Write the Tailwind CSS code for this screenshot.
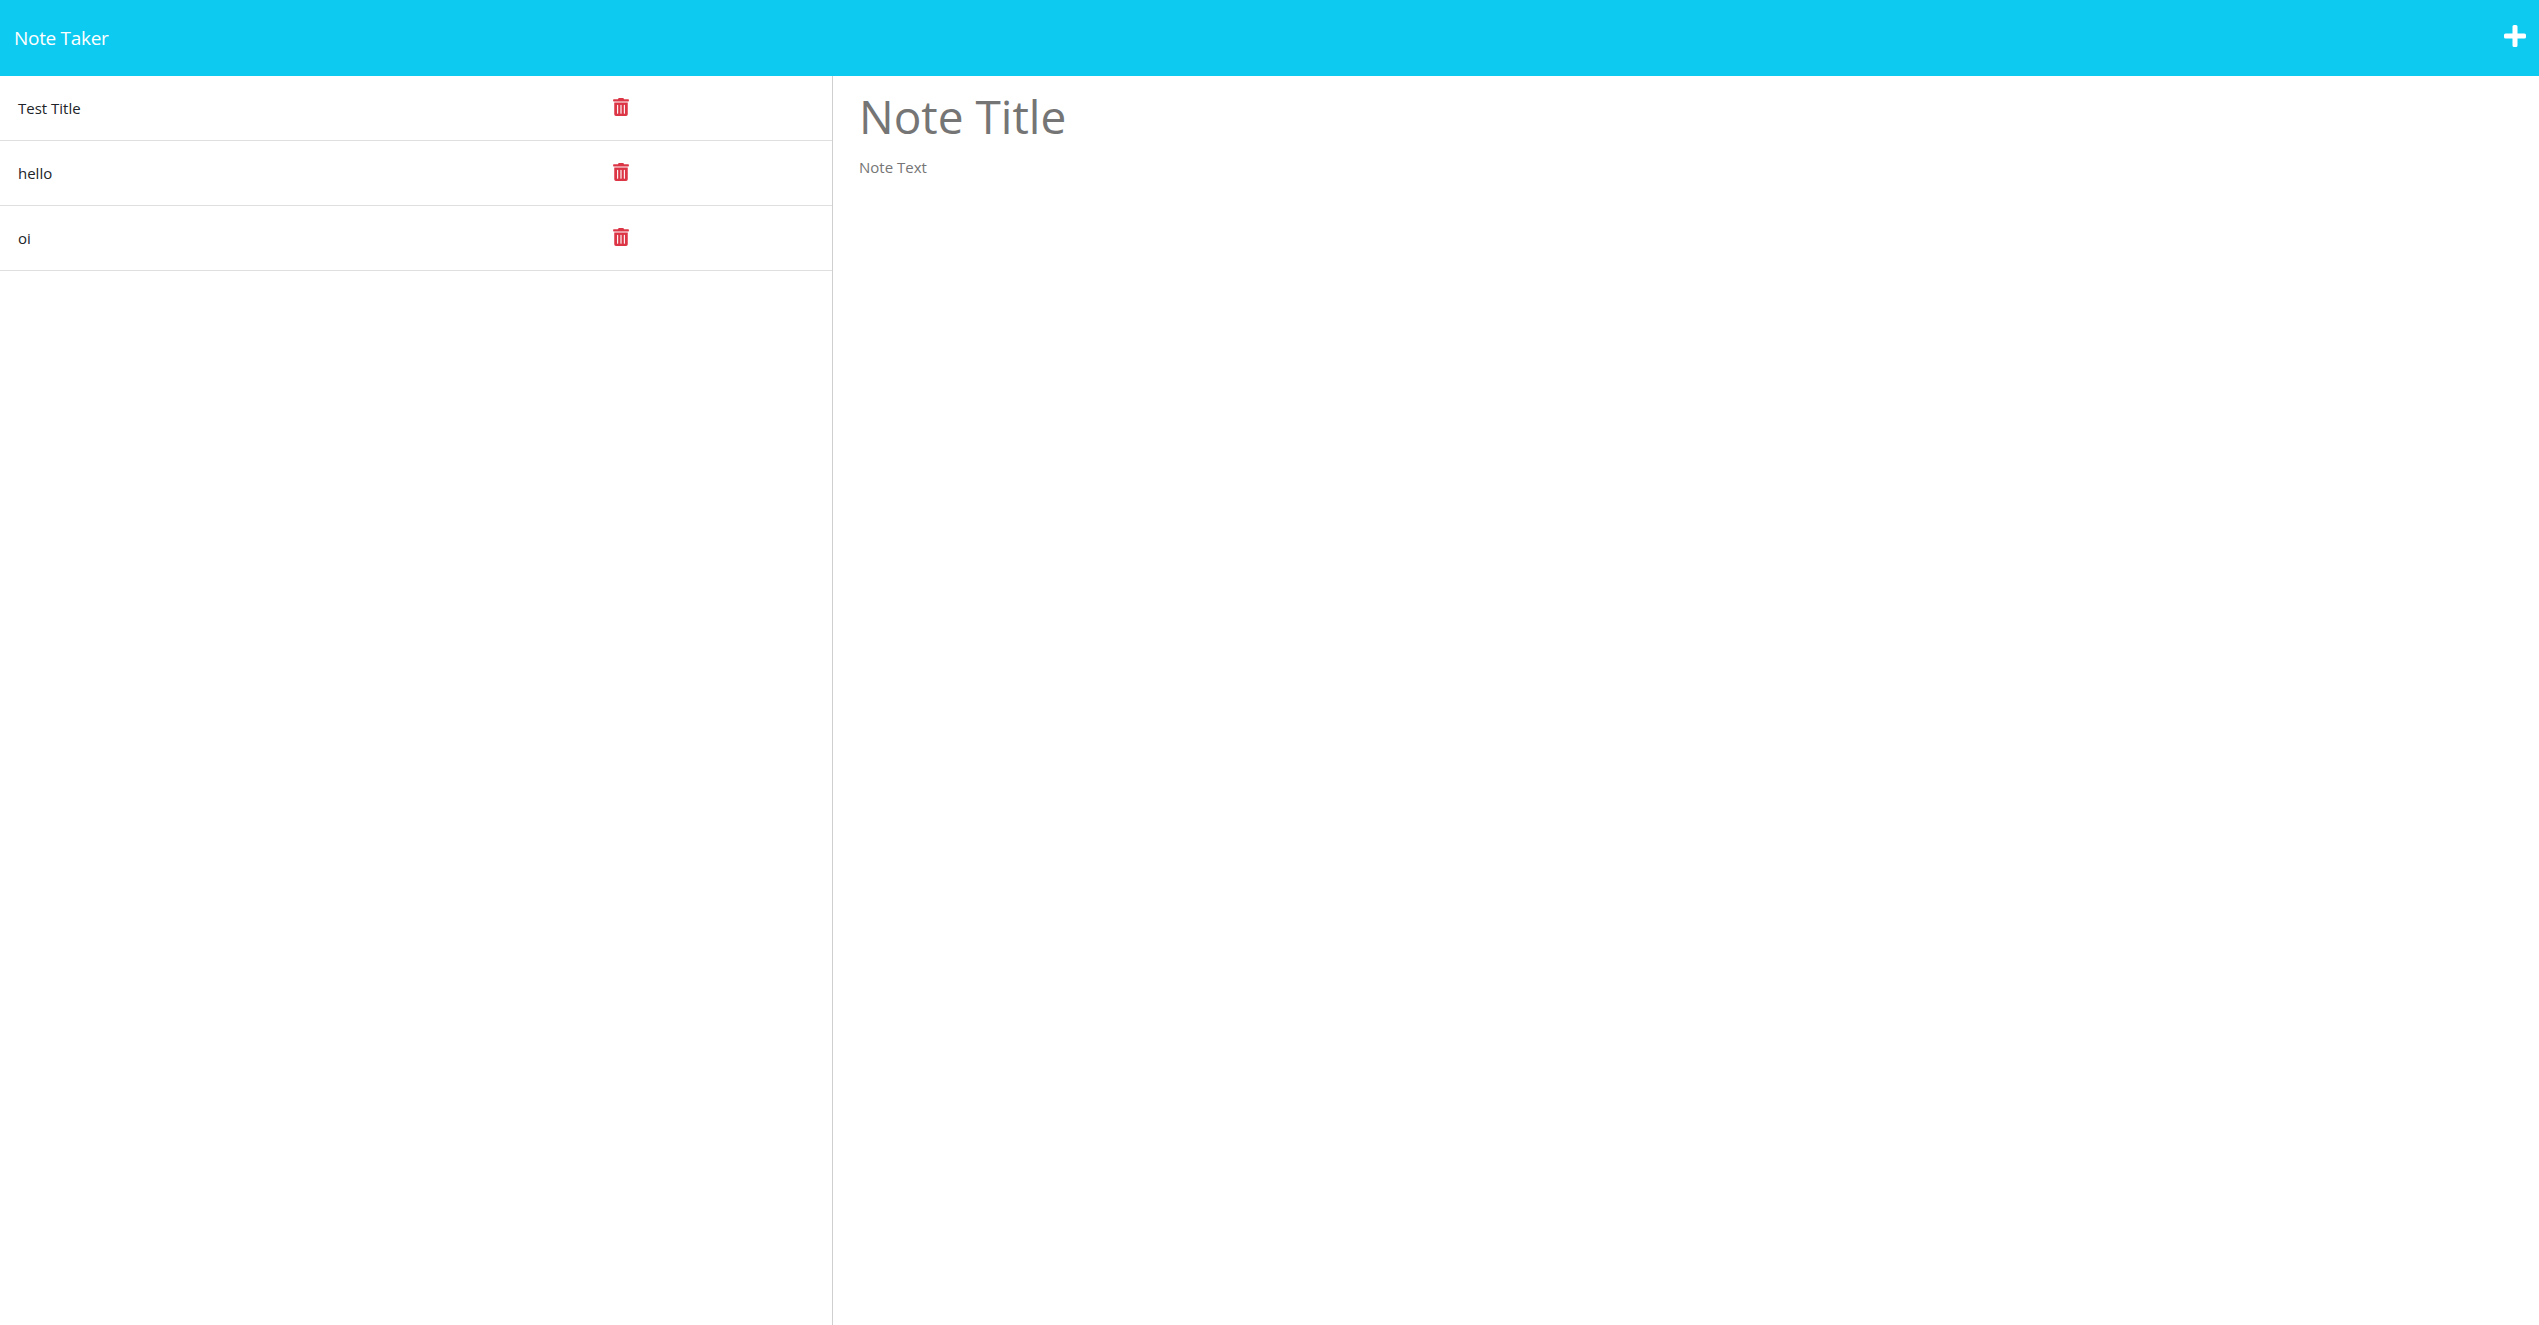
<!DOCTYPE html>
<html lang="en">
<head>
    <meta charset="UTF-8">
    <title>Note Taker</title>
    <script src="https://cdn.jsdelivr.net/npm/@tailwindcss/browser@4"></script>
</head>
<body class="bg-white font-['Open_Sans',sans-serif]">

<div class="flex flex-col h-[1325px]">
    <!-- header -->
    <nav class="flex items-center justify-between h-[76px] bg-[#0dcaf0] pl-[14px] pr-[13px]">
        <span class="text-[19px] tracking-[-0.3px] text-white">Note Taker</span>
        <svg class="w-[22px] h-[22px] -mt-[4px]" viewBox="0 0 22 22"><path fill="#fff" d="M8.500 1.500a1.500 1.500 0 0 1 1.500-1.500h2a1.500 1.500 0 0 1 1.500 1.500v7h7a1.500 1.500 0 0 1 1.500 1.500v2a1.500 1.500 0 0 1-1.500 1.500h-7v7a1.500 1.500 0 0 1-1.500 1.500h-2a1.500 1.500 0 0 1-1.500-1.500v-7h-7a1.500 1.500 0 0 1-1.500-1.500v-2a1.500 1.500 0 0 1 1.500-1.500h7z"/></svg>
    </nav>

    <div class="flex flex-1">
        <!-- note list -->
        <ul class="w-[833px] border-r border-[#cfcfcf] text-[15px] text-[#212529]">
            <li class="flex items-center h-[65px] pl-[18px] pt-[1px] border-b border-[#dfdfdf]">
                <span class="w-[595px]">Test Title</span>
                <svg class="w-[16px] h-[18px] -mt-[3px]" viewBox="0 0 448 512"><path fill="#dc3545" d="M32 464a48 48 0 0 0 48 48h288a48 48 0 0 0 48-48V128H32zm272-256a16 16 0 0 1 32 0v224a16 16 0 0 1-32 0zm-96 0a16 16 0 0 1 32 0v224a16 16 0 0 1-32 0zm-96 0a16 16 0 0 1 32 0v224a16 16 0 0 1-32 0zM432 32H312l-9.400-18.700A24 24 0 0 0 281.100 0H166.800a23.720 23.720 0 0 0-21.400 13.300L136 32H16A16 16 0 0 0 0 48v32a16 16 0 0 0 16 16h416a16 16 0 0 0 16-16V48a16 16 0 0 0-16-16z"/></svg>
            </li>
            <li class="flex items-center h-[65px] pl-[18px] pt-[1px] border-b border-[#dfdfdf]">
                <span class="w-[595px]">hello</span>
                <svg class="w-[16px] h-[18px] -mt-[3px]" viewBox="0 0 448 512"><path fill="#dc3545" d="M32 464a48 48 0 0 0 48 48h288a48 48 0 0 0 48-48V128H32zm272-256a16 16 0 0 1 32 0v224a16 16 0 0 1-32 0zm-96 0a16 16 0 0 1 32 0v224a16 16 0 0 1-32 0zm-96 0a16 16 0 0 1 32 0v224a16 16 0 0 1-32 0zM432 32H312l-9.400-18.700A24 24 0 0 0 281.100 0H166.800a23.720 23.720 0 0 0-21.400 13.300L136 32H16A16 16 0 0 0 0 48v32a16 16 0 0 0 16 16h416a16 16 0 0 0 16-16V48a16 16 0 0 0-16-16z"/></svg>
            </li>
            <li class="flex items-center h-[65px] pl-[18px] pt-[1px] border-b border-[#dfdfdf]">
                <span class="w-[595px]">oi</span>
                <svg class="w-[16px] h-[18px] -mt-[3px]" viewBox="0 0 448 512"><path fill="#dc3545" d="M32 464a48 48 0 0 0 48 48h288a48 48 0 0 0 48-48V128H32zm272-256a16 16 0 0 1 32 0v224a16 16 0 0 1-32 0zm-96 0a16 16 0 0 1 32 0v224a16 16 0 0 1-32 0zm-96 0a16 16 0 0 1 32 0v224a16 16 0 0 1-32 0zM432 32H312l-9.400-18.700A24 24 0 0 0 281.100 0H166.800a23.720 23.720 0 0 0-21.400 13.300L136 32H16A16 16 0 0 0 0 48v32a16 16 0 0 0 16 16h416a16 16 0 0 0 16-16V48a16 16 0 0 0-16-16z"/></svg>
            </li>
        </ul>

        <!-- note editor -->
        <div class="flex-1 pl-[26px] text-[#757575]">
            <h1 class="text-[46px] leading-[64px] mt-[8px] font-normal">Note Title</h1>
            <p class="text-[15px] leading-[24px] mt-[7px]">Note Text</p>
        </div>
    </div>
</div>

</body>
</html>
